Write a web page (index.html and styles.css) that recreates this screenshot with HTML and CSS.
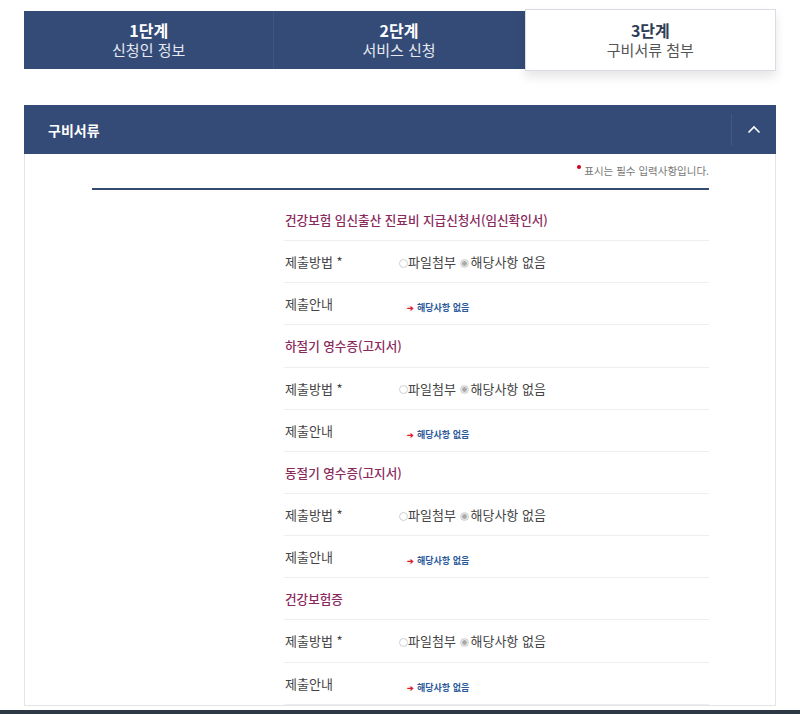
FILE: index.html
```html
<!DOCTYPE html>
<html lang="ko">
<head>
<meta charset="utf-8">
<link rel="stylesheet" href="styles.css">
</head>
<body>
<div class="wrap">
  <div class="steps">
    <div class="step"><div class="step-no">1단계</div><div class="step-name">신청인 정보</div></div>
    <div class="step"><div class="step-no">2단계</div><div class="step-name">서비스 신청</div></div>
    <div class="step active"><div class="step-no">3단계</div><div class="step-name">구비서류 첨부</div></div>
  </div>

  <div class="panel">
    <div class="panel-head">
      <div class="panel-title">구비서류</div>
      <div class="panel-toggle">
        <svg width="14" height="9" viewBox="0 0 14 9"><path d="M1.5 7.5 L7 2 L12.5 7.5" fill="none" stroke="#fff" stroke-width="1.6"/></svg>
      </div>
    </div>
    <div class="panel-body">
      <div class="note"><span class="dot"></span>표시는 필수 입력사항입니다.</div>
      <div class="form">
        <div class="doc">
          <div class="row title">건강보험 임신출산 진료비 지급신청서(임신확인서)</div>
          <div class="row"><div class="label">제출방법 *</div><div class="value"><span class="radio"></span>파일첨부 <span class="radio on"></span>해당사항 없음</div></div>
          <div class="row"><div class="label">제출안내</div><div class="value guide"><span class="arrow">➔</span>해당사항 없음</div></div>
        </div>
        <div class="doc">
          <div class="row title">하절기 영수증(고지서)</div>
          <div class="row"><div class="label">제출방법 *</div><div class="value"><span class="radio"></span>파일첨부 <span class="radio on"></span>해당사항 없음</div></div>
          <div class="row"><div class="label">제출안내</div><div class="value guide"><span class="arrow">➔</span>해당사항 없음</div></div>
        </div>
        <div class="doc">
          <div class="row title">동절기 영수증(고지서)</div>
          <div class="row"><div class="label">제출방법 *</div><div class="value"><span class="radio"></span>파일첨부 <span class="radio on"></span>해당사항 없음</div></div>
          <div class="row"><div class="label">제출안내</div><div class="value guide"><span class="arrow">➔</span>해당사항 없음</div></div>
        </div>
        <div class="doc">
          <div class="row title">건강보험증</div>
          <div class="row"><div class="label">제출방법 *</div><div class="value"><span class="radio"></span>파일첨부 <span class="radio on"></span>해당사항 없음</div></div>
          <div class="row"><div class="label">제출안내</div><div class="value guide"><span class="arrow">➔</span>해당사항 없음</div></div>
        </div>
      </div>
    </div>
  </div>
</div>
<div class="bottom-bar"></div>
</body>
</html>
```

FILE: styles.css
```css
html, body {
  margin: 0;
  padding: 0;
  background: #fff;
  font-family: "Noto Sans CJK KR", "Noto Sans", sans-serif;
  color: #444;
  overflow: hidden;
}
.wrap {
  padding: 11px 24px 0 24px;
  width: 752px;
}
.steps {
  display: flex;
  height: 58px;
  background: #344b78;
}
.step {
  flex: 1;
  display: flex;
  flex-direction: column;
  align-items: center;
  justify-content: center;
  color: #fff;
  border-left: 1px solid #3f5683;
}
.step:first-child { border-left: none; }
.step-no {
  font-size: 16px;
  font-weight: 700;
  line-height: 20px;
}
.step-name {
  font-size: 15px;
  line-height: 20px;
  color: #e6e9f0;
}
.step.active {
  background: #fff;
  color: #2f3d55;
  border: 1px solid #d9dce2;
  margin: -2px 0 -2px 1px;
  box-shadow: 0 6px 10px rgba(0,0,0,0.10);
  position: relative;
  z-index: 1;
}
.step.active .step-name { color: #555; }

.panel {
  margin-top: 36px;
  border: 1px solid #e2e4e8;
  border-top: none;
}
.panel-head {
  height: 49px;
  background: #344b78;
  display: flex;
  align-items: center;
  justify-content: space-between;
  margin: 0 -1px;
}
.panel-title {
  color: #fff;
  font-weight: 700;
  font-size: 14px;
  padding-left: 24px;
}
.panel-toggle {
  width: 44px;
  height: 32px;
  border-left: 1px solid #42588a;
  display: flex;
  align-items: center;
  justify-content: center;
}
.panel-body {
  padding: 0 66px 0 67px;
}
.note {
  text-align: right;
  font-size: 10.5px;
  color: #777;
  height: 34px;
  line-height: 34px;
  border-bottom: 2px solid #344b6f;
}
.dot {
  display: inline-block;
  width: 4px;
  height: 4px;
  border-radius: 50%;
  background: #d0021b;
  margin-right: 3px;
  vertical-align: 6px;
}
.form {
  padding-left: 192px;
  padding-top: 9px;
}
.row {
  height: 41.15px;
  border-bottom: 1px solid #eeeeee;
  display: flex;
  align-items: center;
  font-size: 13px;
}
.row.title {
  color: #8a2a5c;
  font-weight: 500;
  font-size: 12.6px;
  padding-left: 1px;
}
.label {
  width: 113px;
  padding-left: 1px;
  color: #444;
}
.value {
  display: flex;
  align-items: center;
  color: #444;
  white-space: pre;
}
.radio {
  display: inline-block;
  width: 9px;
  height: 9px;
  border: 1px solid #cfcfcf;
  border-radius: 50%;
  box-sizing: border-box;
  margin-top: 3px;
  margin-left: 1px;
  background: #fff;
}
.radio.on {
  background: radial-gradient(circle, #aaa 0 2px, #e4e4e4 2.5px);
  border-color: #d2d2d2;
  margin-right: 1px;
}
.guide {
  margin-left: 9px;
  margin-top: 8px;
  font-size: 9px;
  font-weight: 700;
  color: #2b5a9a;
}
.arrow {
  color: #e0182c;
  font-size: 8px;
  margin-right: 3px;
}
.bottom-bar {
  position: fixed;
  left: 0;
  right: 0;
  bottom: 0;
  height: 4px;
  background: #2d3a45;
}
```
